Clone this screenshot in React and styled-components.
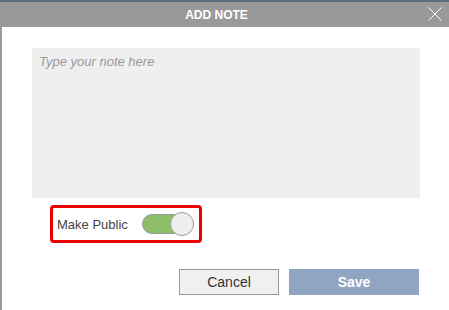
import styled, { createGlobalStyle } from 'styled-components';

const GlobalStyle = createGlobalStyle`
  html, body {
    margin: 0;
    padding: 0;
    background: #ffffff;
    font-family: "Liberation Sans", Arial, sans-serif;
  }
`;

const Page = styled.div`
  width: 449px;
  height: 310px;
  display: flex;
  flex-direction: column;
  overflow: hidden;
`;

const TopStrip = styled.div`
  height: 2px;
  background: #5d6c80;
  flex: none;
`;

const Row = styled.div`
  flex: 1;
  display: flex;
`;

const Backdrop = styled.div`
  width: 2px;
  background: #9a9a9a;
  flex: none;
`;

const Dialog = styled.div`
  flex: 1;
  display: flex;
  flex-direction: column;
  background: #ffffff;
`;

const Header = styled.div`
  height: 25px;
  background: #999999;
  position: relative;
  display: flex;
  align-items: center;
  justify-content: center;
  padding-right: 18px;
`;

const Title = styled.h2`
  margin: 0;
  color: #ffffff;
  font-size: 12px;
  font-weight: bold;
`;

const Close = styled.button`
  position: absolute;
  right: 6px;
  top: 4px;
  width: 16px;
  height: 16px;
  padding: 0;
  border: none;
  background: transparent;
  cursor: pointer;
`;

const Body = styled.div`
  padding: 21px 29px 0 30px;
  display: flex;
  flex-direction: column;
`;

const NoteArea = styled.textarea`
  box-sizing: border-box;
  width: 388px;
  height: 150px;
  border: none;
  background: #efefef;
  padding: 6px 7px;
  resize: none;
  font-family: "Liberation Sans", Arial, sans-serif;
  font-size: 13px;
  color: #333;
  outline: none;

  &::placeholder {
    color: #9a9a9a;
    font-style: italic;
  }
`;

const Highlight = styled.div`
  margin: 7px 0 0 18px;
  box-sizing: border-box;
  width: 152px;
  height: 38px;
  border: 3px solid #ee0000;
  border-radius: 4px;
  display: flex;
  align-items: center;
  padding-left: 4px;
  gap: 14px;
`;

const Label = styled.span`
  font-size: 13px;
  color: #444444;
`;

const Switch = styled.div`
  position: relative;
  width: 52px;
  height: 24px;
  display: flex;
  align-items: center;
`;

const Track = styled.div`
  box-sizing: border-box;
  width: 48px;
  height: 20px;
  border-radius: 10px;
  background: ${p => (p.$on ? '#8cbf68' : '#cccccc')};
  border: 1px solid #9a9a9a;
`;

const Knob = styled.div`
  position: absolute;
  top: 0;
  right: 0;
  box-sizing: border-box;
  width: 24px;
  height: 24px;
  border-radius: 50%;
  background: #efefef;
  border: 1px solid #9a9a9a;
`;

const Actions = styled.div`
  display: flex;
  justify-content: flex-end;
  gap: 10px;
  margin-top: 26px;
  padding-right: 1px;
`;

const Button = styled.button`
  box-sizing: border-box;
  height: 26px;
  width: ${p => p.$w}px;
  font-family: "Liberation Sans", Arial, sans-serif;
  font-size: 14px;
  cursor: pointer;
  border: 1px solid ${p => (p.$primary ? '#8fa5c2' : '#999999')};
  background: ${p => (p.$primary ? '#8fa5c2' : '#f0f0f0')};
  color: ${p => (p.$primary ? '#ffffff' : '#333333')};
  font-weight: ${p => (p.$primary ? 'bold' : 'normal')};
`;

export default function App() {
  return (
    <>
      <GlobalStyle />
      <Page>
        <TopStrip />
        <Row>
          <Backdrop />
          <Dialog>
            <Header>
              <Title>ADD NOTE</Title>
              <Close aria-label="Close">
                <svg width="16" height="16" viewBox="0 0 16 16">
                  <path d="M1.5 1.5 L14.5 14.5 M14.5 1.5 L1.5 14.5" stroke="#ffffff" strokeWidth="1" fill="none" />
                </svg>
              </Close>
            </Header>
            <Body>
              <NoteArea placeholder="Type your note here" />
              <Highlight>
                <Label>Make Public</Label>
                <Switch>
                  <Track $on />
                  <Knob />
                </Switch>
              </Highlight>
              <Actions>
                <Button $w={100}>Cancel</Button>
                <Button $w={130} $primary>Save</Button>
              </Actions>
            </Body>
          </Dialog>
        </Row>
      </Page>
    </>
  );
}
